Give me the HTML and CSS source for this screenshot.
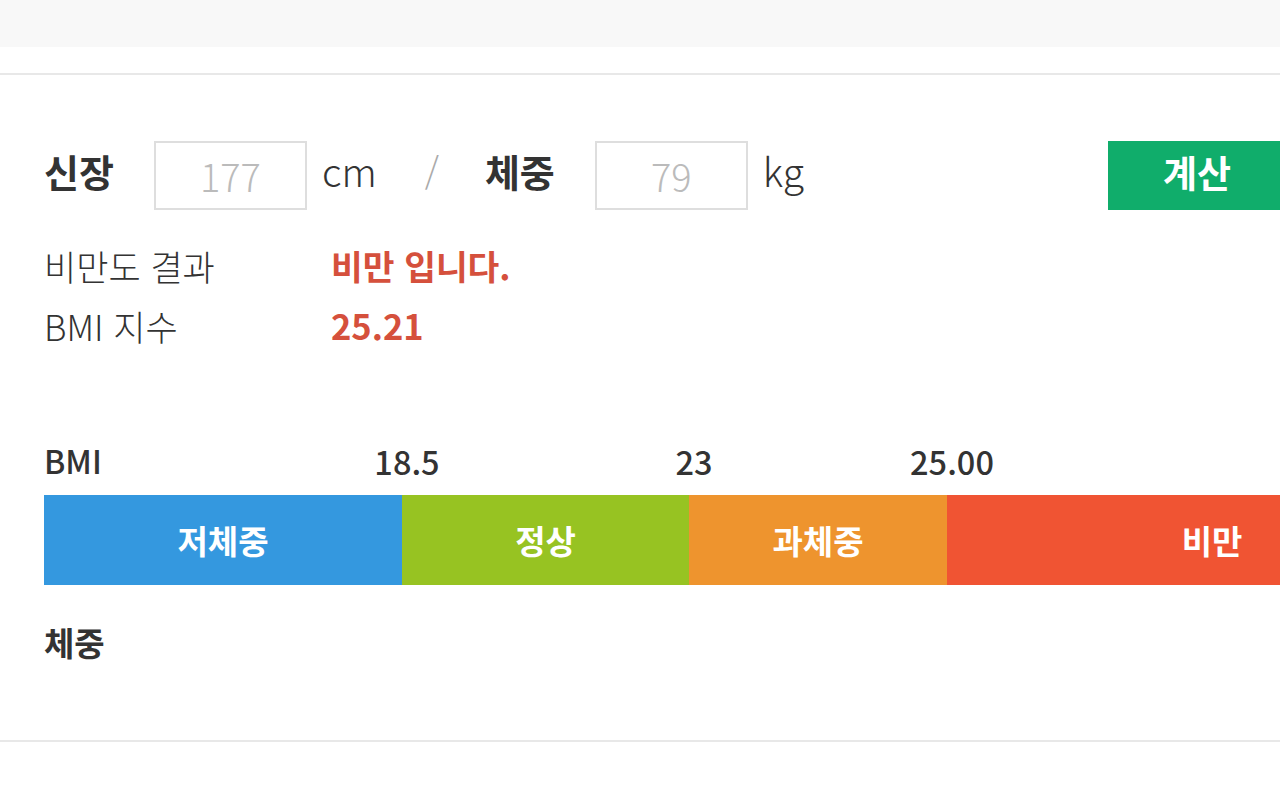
FILE: index.html
```html
<!DOCTYPE html>
<html lang="ko">
<head>
  <meta charset="UTF-8" />
  <meta name="viewport" content="width=device-width, initial-scale=1.0" />
  <title>BMI 계산기</title>
  <link rel="stylesheet" href="styles.css">
</head>
<body>
  <div class="topbar"></div>
  <div class="panel">
    <div class="form-row">
      <span class="label">신장</span>
      <input class="num-input" type="text" placeholder="177">
      <span class="unit">cm</span>
      <span class="slash">/</span>
      <span class="label">체중</span>
      <input class="num-input" type="text" placeholder="79">
      <span class="unit">kg</span>
      <button class="calc-btn">계산</button>
    </div>

    <div class="result">
      <div class="result-row">
        <span class="result-name">비만도 결과</span>
        <span class="result-value">비만 입니다.</span>
      </div>
      <div class="result-row">
        <span class="result-name">BMI 지수</span>
        <span class="result-value">25.21</span>
      </div>
    </div>

    <div class="scale">
      <div class="scale-labels">
        <div class="cell under"><span class="scale-title">BMI</span><span class="mark">18.5</span></div>
        <div class="cell normal"><span class="mark">23</span></div>
        <div class="cell over"><span class="mark">25.00</span></div>
        <div class="cell obese"></div>
      </div>
      <div class="bar">
        <div class="seg under">저체중</div>
        <div class="seg normal">정상</div>
        <div class="seg over">과체중</div>
        <div class="seg obese">비만</div>
      </div>
    </div>

    <div class="weight-title">체중</div>
  </div>
</body>
</html>
```

FILE: styles.css
```css
body {
  margin: 0;
  padding: 0;
  background: #fff;
  font-family: "Noto Sans CJK KR", "Noto Sans", sans-serif;
  color: #333;
  overflow: hidden;
}

.topbar {
  height: 47px;
  background: #f8f8f8;
}

.panel {
  margin-top: 26px;
  border-top: 2px solid #e8e8e8;
  border-bottom: 2px solid #e8e8e8;
  width: 1480px;
  padding: 65px 0 74px 44px;
  box-sizing: border-box;
}

.form-row {
  display: flex;
  align-items: center;
  width: 1242px;
  height: 70px;
}
.label {
  font-size: 38px;
  font-weight: 700;
  color: #333;
  padding-bottom: 10px;
}
.num-input {
  width: 153px;
  height: 69px;
  box-sizing: border-box;
  border: 2px solid #dedede;
  margin-left: 40px;
  padding: 0;
  text-align: center;
  font-family: inherit;
  font-size: 38px;
  font-weight: 300;
  color: #333;
  outline: none;
}
.num-input::placeholder {
  color: #bbb;
}
.unit {
  font-size: 39px;
  font-weight: 300;
  margin-left: 15px;
  color: #333;
  padding-bottom: 10px;
}
.slash {
  font-size: 36px;
  font-weight: 300;
  color: #aaa;
  margin: 0 46px 0 48px;
  padding-bottom: 10px;
}
.calc-btn {
  margin-left: auto;
  width: 178px;
  height: 69px;
  border: 0;
  background: #10ad6b;
  color: #fff;
  font-family: inherit;
  font-size: 37px;
  font-weight: 700;
  padding: 0 0 6px;
}

.result {
  margin-top: 25px;
}
.result-row {
  display: flex;
  align-items: center;
  height: 60px;
}
.result-name {
  width: 287px;
  font-size: 35px;
  font-weight: 300;
  color: #333;
}
.result-value {
  font-size: 34.5px;
  font-weight: 700;
  color: #d5503c;
}

.scale {
  margin-top: 80px;
}
.scale-labels {
  display: flex;
  height: 50px;
  align-items: center;
}
.cell {
  display: flex;
  justify-content: flex-end;
  align-items: center;
}
.scale-title {
  margin-right: auto;
  font-size: 32px;
  font-weight: 500;
}
.mark {
  font-size: 32.5px;
  font-weight: 500;
  color: #333;
  transform: translateX(calc(50% + 5px));
}
.bar {
  display: flex;
  height: 90px;
  margin-top: 10px;
}
.seg {
  display: flex;
  align-items: center;
  justify-content: center;
  color: #fff;
  font-size: 33px;
  font-weight: 700;
}
.under { width: 358px; }
.normal { width: 287px; }
.over { width: 258px; }
.obese { width: 530px; }
.seg.under { background: #3498df; }
.seg.normal { background: #97c322; }
.seg.over { background: #ee942e; }
.seg.obese { background: #f05433; }

.weight-title {
  margin-top: 33px;
  font-size: 33px;
  font-weight: 700;
  color: #333;
}
```
